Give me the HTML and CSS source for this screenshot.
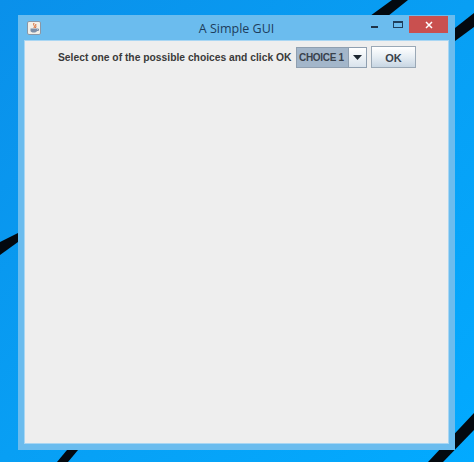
FILE: index.html
```html
<!DOCTYPE html>
<html>
<head>
<meta charset="utf-8">
<title>A Simple GUI</title>
<link rel="stylesheet" href="styles.css">
</head>
<body>
<div class="desktop">
  <svg class="wallpaper" width="474" height="462" viewBox="0 0 474 462">
    <defs>
      <linearGradient id="sky" x1="0" y1="0" x2="1" y2="1">
        <stop offset="0" stop-color="#0a90ea"/>
        <stop offset="0.5" stop-color="#089ff4"/>
        <stop offset="1" stop-color="#02aaff"/>
      </linearGradient>
    </defs>
    <rect width="474" height="462" fill="url(#sky)"/>
    <path d="M370 16 L392 0 L408 0 L388 16 Z" fill="#03090f"/>
    <path d="M455 28 L474 13 L474 27 L455 41 Z" fill="#03090f"/>
    <path d="M0 242 L18 233 L18 242 L0 255 Z" fill="#03090f"/>
    <path d="M57 462 L67 450 L78 450 L68 462 Z" fill="#03090f"/>
    <path d="M428 462 L474 413 L474 430 L443 462 Z" fill="#03090f"/>
  </svg>
  <div class="window">
    <header class="titlebar">
      <svg class="app-icon" width="14" height="14" viewBox="0 0 14 14">
        <rect x="0.5" y="0.5" width="13" height="13" rx="1.5" fill="#f2efe8" stroke="#8a97a6"/>
        <path d="M7 2 C5.5 4 8.5 4.5 7 7 M9 3 C8 4.5 9.5 5 8.5 7" fill="none" stroke="#d8642c" stroke-width="1"/>
        <path d="M3.5 7.5 H10 V9.5 C10 11 8.5 11.5 6.8 11.5 C5 11.5 3.5 11 3.5 9.5 Z" fill="#7d8fa8"/>
        <path d="M10 8 H11.5 V9.5 H10" fill="none" stroke="#7d8fa8"/>
      </svg>
      <span class="title">A Simple GUI</span>
      <div class="controls">
        <svg class="ctl-min" width="7" height="2" viewBox="0 0 7 2"><rect width="7" height="2" fill="#1f3347"/></svg>
        <svg class="ctl-max" width="10" height="7" viewBox="0 0 10 7"><rect x="0.5" y="0.5" width="9" height="6" fill="none" stroke="#1f3f5c"/><rect x="1" y="1" width="8" height="1" fill="#1f3f5c"/></svg>
        <div class="ctl-close">
          <svg width="8" height="8" viewBox="0 0 8 8"><path d="M1 1 L7 7 M7 1 L1 7" stroke="#fff" stroke-width="1.5"/></svg>
        </div>
      </div>
    </header>
    <main class="content">
      <div class="form-row">
        <span class="prompt">Select one of the possible choices and click OK</span>
        <div class="combo">
          <span class="combo-value">CHOICE 1</span>
          <span class="combo-arrow"><svg width="9" height="5" viewBox="0 0 9 5"><path d="M0 0 H9 L4.5 5 Z" fill="#1c2630"/></svg></span>
        </div>
        <button class="ok">OK</button>
      </div>
    </main>
  </div>
</div>
</body>
</html>
```
FILE: styles.css
```css
html, body {
  margin: 0;
  padding: 0;
}
.desktop {
  position: relative;
  width: 474px;
  height: 462px;
  overflow: hidden;
  font-family: "Liberation Sans", Arial, sans-serif;
}
.wallpaper {
  position: absolute;
  left: 0;
  top: 0;
}
.window {
  position: absolute;
  left: 18px;
  top: 15px;
  width: 437px;
  height: 435px;
  box-sizing: border-box;
  padding: 0 7px 7px;
  background: #6bbcee;
  display: flex;
  flex-direction: column;
}
.titlebar {
  height: 26px;
  flex: none;
  position: relative;
  display: flex;
  align-items: center;
  justify-content: center;
}
.app-icon {
  position: absolute;
  left: 2px;
  top: 6px;
}
.title {
  font-family: "Open Sans", "Liberation Sans", sans-serif;
  font-size: 12.5px;
  color: #1d3d5c;
}
.controls {
  position: absolute;
  right: 0;
  top: 1px;
  display: flex;
  align-items: flex-start;
}
.ctl-min {
  margin: 10px 15px 0 0;
}
.ctl-max {
  margin: 5px 6px 0 0;
}
.ctl-close {
  width: 39px;
  height: 17px;
  background: #c9504f;
  display: flex;
  align-items: center;
  justify-content: center;
}
.content {
  flex: 1;
  background: #eeeeee;
  box-shadow: 0 0 0 1px #a9d6f3;
  padding-top: 5px;
}
.form-row {
  display: flex;
  align-items: flex-start;
  padding-left: 33px;
}
.prompt {
  font-size: 10.3px;
  font-weight: bold;
  color: #3a3a3a;
  margin-top: 6px;
  white-space: nowrap;
  width: 238px;
}
.combo {
  width: 71px;
  height: 21px;
  margin-top: 1px;
  box-sizing: border-box;
  border: 1px solid #8f9fb0;
  display: flex;
  background: #fff;
}
.combo-value {
  flex: 1;
  background: #a3b6ca;
  font-size: 10px;
  letter-spacing: -0.3px;
  font-weight: bold;
  color: #39414c;
  line-height: 19px;
  padding-left: 2px;
  white-space: nowrap;
}
.combo-arrow {
  width: 17px;
  flex: none;
  border-left: 1px solid #8f9fb0;
  background: linear-gradient(#ffffff, #d9e3ec);
  display: flex;
  align-items: center;
  justify-content: center;
}
.ok {
  width: 45px;
  height: 22px;
  margin-left: 4px;
  box-sizing: border-box;
  border: 1px solid #9aa8b6;
  padding: 1px 0 0;
  background: linear-gradient(#ffffff, #e6edf3 50%, #c8d6e3);
  font-family: "Liberation Sans", Arial, sans-serif;
  font-size: 11px;
  font-weight: bold;
  color: #39414c;
}
```
